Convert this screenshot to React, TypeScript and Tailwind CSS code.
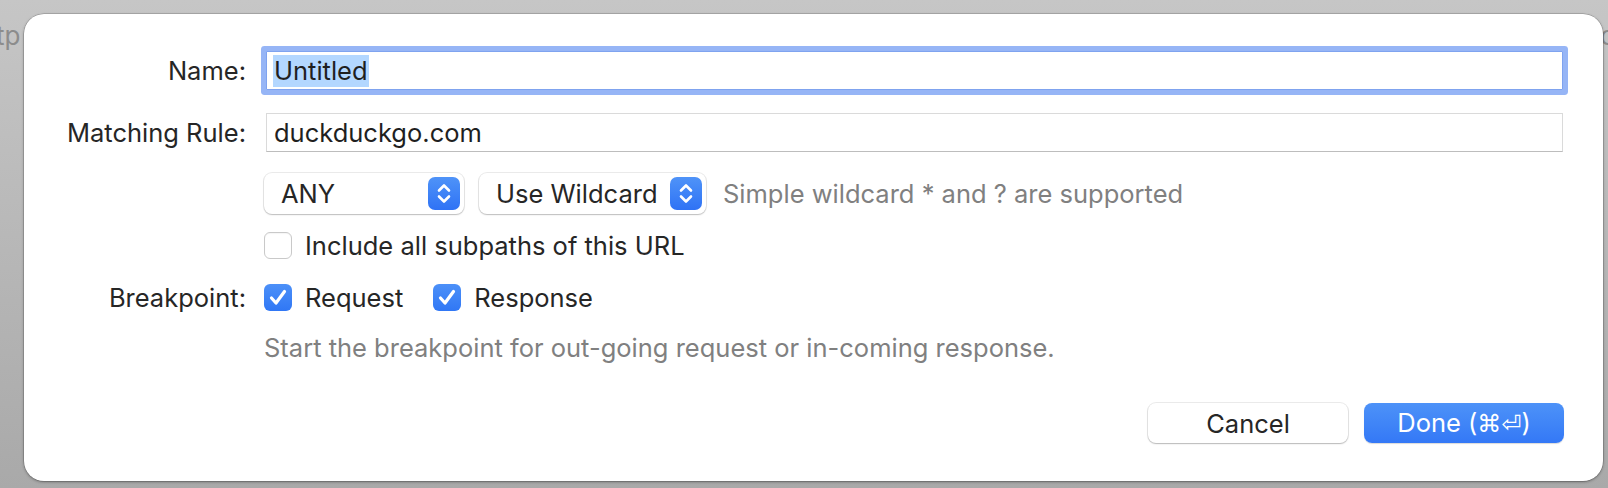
import React from "react";

// Breakpoint rule editor sheet (macOS style), shown over a dimmed window.
const FONT = { fontFamily: "Inter, 'Liberation Sans', 'DejaVu Sans', sans-serif" };

function Stepper() {
  return (
    <span className="flex h-[33px] w-[32px] items-center justify-center rounded-[7px] bg-gradient-to-b from-[#4f93f8] to-[#2f72f5]">
      <svg width="32" height="33" viewBox="0 0 32 33" fill="none">
        <path d="M11 13.5 L16 8.5 L21 13.5" stroke="white" strokeWidth="2.6" strokeLinecap="round" strokeLinejoin="round" />
        <path d="M11 19.5 L16 24.5 L21 19.5" stroke="white" strokeWidth="2.6" strokeLinecap="round" strokeLinejoin="round" />
      </svg>
    </span>
  );
}

function Popup({ label, width }: { label: string; width: string }) {
  return (
    <div
      className={`flex h-[41px] ${width} items-center justify-between rounded-[8px] bg-white pl-[17px] pr-[4px] shadow-[0_0_0_1px_rgba(0,0,0,0.08),0_1px_1.5px_rgba(0,0,0,0.2)]`}
    >
      <span className="text-[#262626]">{label}</span>
      <Stepper />
    </div>
  );
}

function Checkbox({ checked }: { checked: boolean }) {
  if (checked) {
    return (
      <span className="flex h-[27px] w-[28px] shrink-0 items-center justify-center rounded-[6px] bg-gradient-to-b from-[#4c90f8] to-[#3077f5]">
        <svg width="28" height="27" viewBox="0 0 28 27" fill="none">
          <path d="M7.5 14 L12 19 L20.5 7.5" stroke="white" strokeWidth="3.2" strokeLinecap="round" strokeLinejoin="round" />
        </svg>
      </span>
    );
  }
  return <span className="h-[27px] w-[28px] shrink-0 rounded-[6px] border border-[#c9c9c9] bg-white shadow-[inset_0_1px_1px_rgba(0,0,0,0.04)]" />;
}

export default function App() {
  return (
    <div className="relative h-[488px] w-[1608px] overflow-hidden bg-gradient-to-b from-[#c6c6c6] to-[#a9a9a9]" style={FONT}>
      {/* window content peeking out behind the sheet */}
      <span className="absolute left-[-4px] top-[16px] text-[26px] text-[#8c8c8c]">tp</span>
      <span className="absolute left-[1600px] top-[16px] text-[26px] text-[#8c8c8c]">c</span>

      <div className="absolute left-[24px] top-[14px] h-[467px] w-[1579px] rounded-[20px] bg-white text-[25.5px] leading-[27px] shadow-[0_1px_3px_rgba(0,0,0,0.35),0_0_0_0.5px_rgba(0,0,0,0.25)]">
        <div className="grid grid-cols-[222px_1fr] items-center gap-x-[18px] pr-[40px] pt-[37px] text-[#262626]">
          {/* Name */}
          <div className="text-right">Name:</div>
          <div className="ml-[2px] flex h-[39px] items-center rounded-[1px] border border-[#7fa3ef] bg-white pl-[6px] shadow-[0_0_0_5px_#96b5f6]">
            <span className="flex h-[32px] items-center bg-[#b3d7ff] px-[1px] text-[#1f1f1f]">Untitled</span>
          </div>

          {/* Matching rule */}
          <div className="mt-[23px] text-right">Matching Rule:</div>
          <div className="ml-[2px] mt-[23px] flex h-[39px] items-center border border-[#dadada] border-b-[#bdbdbd] bg-white pl-[7px] text-[#1f1f1f]">
            duckduckgo.com
          </div>

          {/* Popups */}
          <div />
          <div className="mt-[21px] flex items-center">
            <Popup label="ANY" width="w-[200px]" />
            <div className="ml-[15px]">
              <Popup label="Use Wildcard" width="w-[227px]" />
            </div>
            <span className="ml-[17px] text-[#808080]">Simple wildcard * and ? are supported</span>
          </div>

          {/* Subpaths */}
          <div />
          <div className="mt-[18px] flex items-center gap-[13px]">
            <Checkbox checked={false} />
            <span>Include all subpaths of this URL</span>
          </div>

          {/* Breakpoint */}
          <div className="mt-[25px] text-right">Breakpoint:</div>
          <div className="mt-[25px] flex items-center">
            <Checkbox checked />
            <span className="ml-[13px]">Request</span>
            <span className="ml-[30px]">
              <Checkbox checked />
            </span>
            <span className="ml-[13px]">Response</span>
          </div>

          <div />
          <div className="mt-[23px] text-[#808080]">Start the breakpoint for out-going request or in-coming response.</div>
        </div>

        <div className="mt-[42px] flex justify-end gap-[16px] pr-[39px]">
          <button className="h-[40px] w-[200px] rounded-[8px] bg-white text-[#262626] shadow-[0_0_0_1px_rgba(0,0,0,0.08),0_1px_1.5px_rgba(0,0,0,0.22)]">
            Cancel
          </button>
          <button className="h-[40px] w-[200px] rounded-[8px] bg-gradient-to-b from-[#4d92f8] to-[#3478f6] text-white shadow-[0_1px_1px_rgba(0,0,0,0.15)]">
            Done (<span style={{ fontFamily: "'DejaVu Sans', sans-serif" }} className="text-[24px]">⌘⏎</span>)
          </button>
        </div>
      </div>
    </div>
  );
}
